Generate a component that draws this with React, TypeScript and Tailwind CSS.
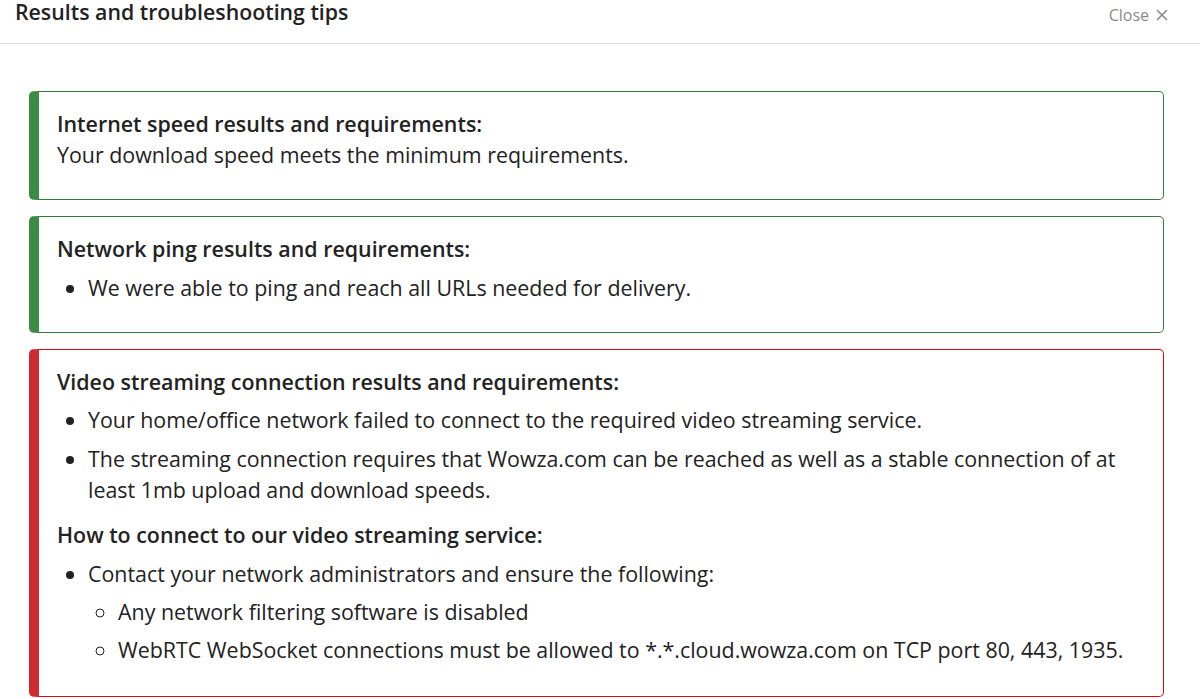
import React from "react";

const font = { fontFamily: '"Open Sans", "Noto Sans", sans-serif' };

function Card({
  tone,
  children,
}: {
  tone: "green" | "red";
  children: React.ReactNode;
}) {
  const cls =
    tone === "green"
      ? "border border-[#2f7d32] border-l-[10px] border-l-[#3d8b45]"
      : "border border-[#d80a0a] border-l-[10px] border-l-[#d02a30]";
  return (
    <div
      className={`${cls} rounded-[5px] bg-white pl-[18px] pr-4 pt-4 pb-4 text-[21.4px] leading-[31px] text-[#222]`}
    >
      {children}
    </div>
  );
}

export default function App() {
  return (
    <div className="min-h-[699px] w-[1200px] bg-white text-[#222]" style={font}>
      <div className="flex h-[44px] items-start justify-between border-b border-[#dcdcdc] pl-[15px] pr-[32px]">
        <h1 className="text-[21.3px] font-semibold leading-[24px] text-[#222]">
          Results and troubleshooting tips
        </h1>
        <button className="mt-[4px] flex items-center gap-[7px] text-[16px] leading-[22px] text-[#8a8a8a]">
          Close
          <svg width="12" height="12" viewBox="0 0 12 12" fill="none">
            <path d="M1 1L11 11M11 1L1 11" stroke="#8a8a8a" strokeWidth="1.6" />
          </svg>
        </button>
      </div>

      <div className="ml-[29px] mr-[36px] mt-[47px] flex flex-col gap-4">
        <Card tone="green">
          <p className="font-semibold">Internet speed results and requirements:</p>
          <p className="mb-[13px]">Your download speed meets the minimum requirements.</p>
        </Card>

        <Card tone="green">
          <p className="font-semibold">Network ping results and requirements:</p>
          <ul className="mt-2 mb-[13px] list-disc pl-[31px]">
            <li>We were able to ping and reach all URLs needed for delivery.</li>
          </ul>
        </Card>

        <Card tone="red">
          <p className="font-semibold">Video streaming connection results and requirements:</p>
          <ul className="mt-[7px] mb-[14px] list-disc pl-[31px]">
            <li>Your home/office network failed to connect to the required video streaming service.</li>
            <li className="mt-[8px]">
              The streaming connection requires that Wowza.com can be reached as well as a stable
              connection of at least 1mb upload and download speeds.
            </li>
          </ul>
          <p className="font-semibold">How to connect to our video streaming service:</p>
          <ul className="mt-[8px] mb-[15px] list-disc pl-[31px]">
            <li>
              Contact your network administrators and ensure the following:
              <ul className="mt-[7px] list-[circle] pl-[30px]">
                <li>Any network filtering software is disabled</li>
                <li className="mt-[7px]">
                  WebRTC WebSocket connections must be allowed to *.*.cloud.wowza.com on TCP port 80,
                  443, 1935.
                </li>
              </ul>
            </li>
          </ul>
        </Card>
      </div>
    </div>
  );
}
